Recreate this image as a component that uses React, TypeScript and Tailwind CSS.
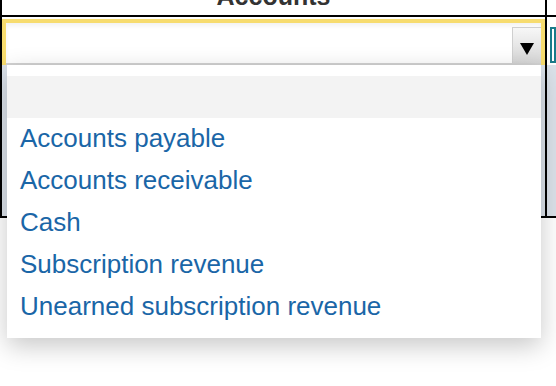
const OPTIONS = [
  "",
  "Accounts payable",
  "Accounts receivable",
  "Cash",
  "Subscription revenue",
  "Unearned subscription revenue",
];

export default function App() {
  return (
    <div className="relative w-[556px] h-[386px] overflow-hidden bg-white font-['Liberation_Sans',Arial,sans-serif]">
      <div className="flex">
        {/* account column */}
        <div className="w-[547px] shrink-0 border-x-2 border-black">
          <div className="h-[17px] overflow-hidden border-b-2 border-black flex items-end justify-center pb-[6px]">
            <span className="text-[25px] leading-[25px] font-bold text-[#333]">Accounts</span>
          </div>
          <div className="relative h-[201px] bg-[#dbe2ea] border-b-2 border-black">
            <div className="bg-white pt-[2px]">
              <div className="border-t-4 border-x-4 border-[#f7dc6f]">
                <div className="h-[42px] bg-white border-b-2 border-[#d2d2d2] shadow-[inset_0_3px_4px_rgba(0,0,0,0.05)] flex justify-end pt-[4px]">
                  <div className="w-[29px] h-[36px] border-l border-t border-[#cfcfcf] bg-gradient-to-b from-[#f7f7f7] to-[#d6d6d6] flex items-center justify-center pt-[6px]">
                    <svg width="14" height="12" viewBox="0 0 14 12">
                      <polygon points="0,0 14,0 7,12" fill="#000" />
                    </svg>
                  </div>
                </div>
              </div>
            </div>

            {/* open list */}
            <ul className="absolute z-10 top-[48px] left-[5px] w-[534px] bg-white pt-[11px] pb-[10px] shadow-[0_8px_24px_rgba(0,0,0,0.22)]">
              {OPTIONS.map((opt, i) => (
                <li
                  key={i}
                  className={
                    "h-[42px] pl-[13px] text-[26px] leading-[41px] text-[#1a66a7] whitespace-nowrap " +
                    (i === 0 ? "bg-[#f3f3f3]" : "")
                  }
                >
                  {opt}
                </li>
              ))}
            </ul>
          </div>
        </div>

        {/* next column, cut off */}
        <div className="flex-1">
          <div className="h-[17px] border-b-2 border-black" />
          <div className="h-[201px] bg-[#dbe2ea] border-b-2 border-black">
            <div className="h-[48px] bg-white pt-[10px] pl-[3px]">
              <div className="h-[36px] border-2 border-[#1b7b8a] bg-white" />
            </div>
          </div>
        </div>
      </div>
    </div>
  );
}
